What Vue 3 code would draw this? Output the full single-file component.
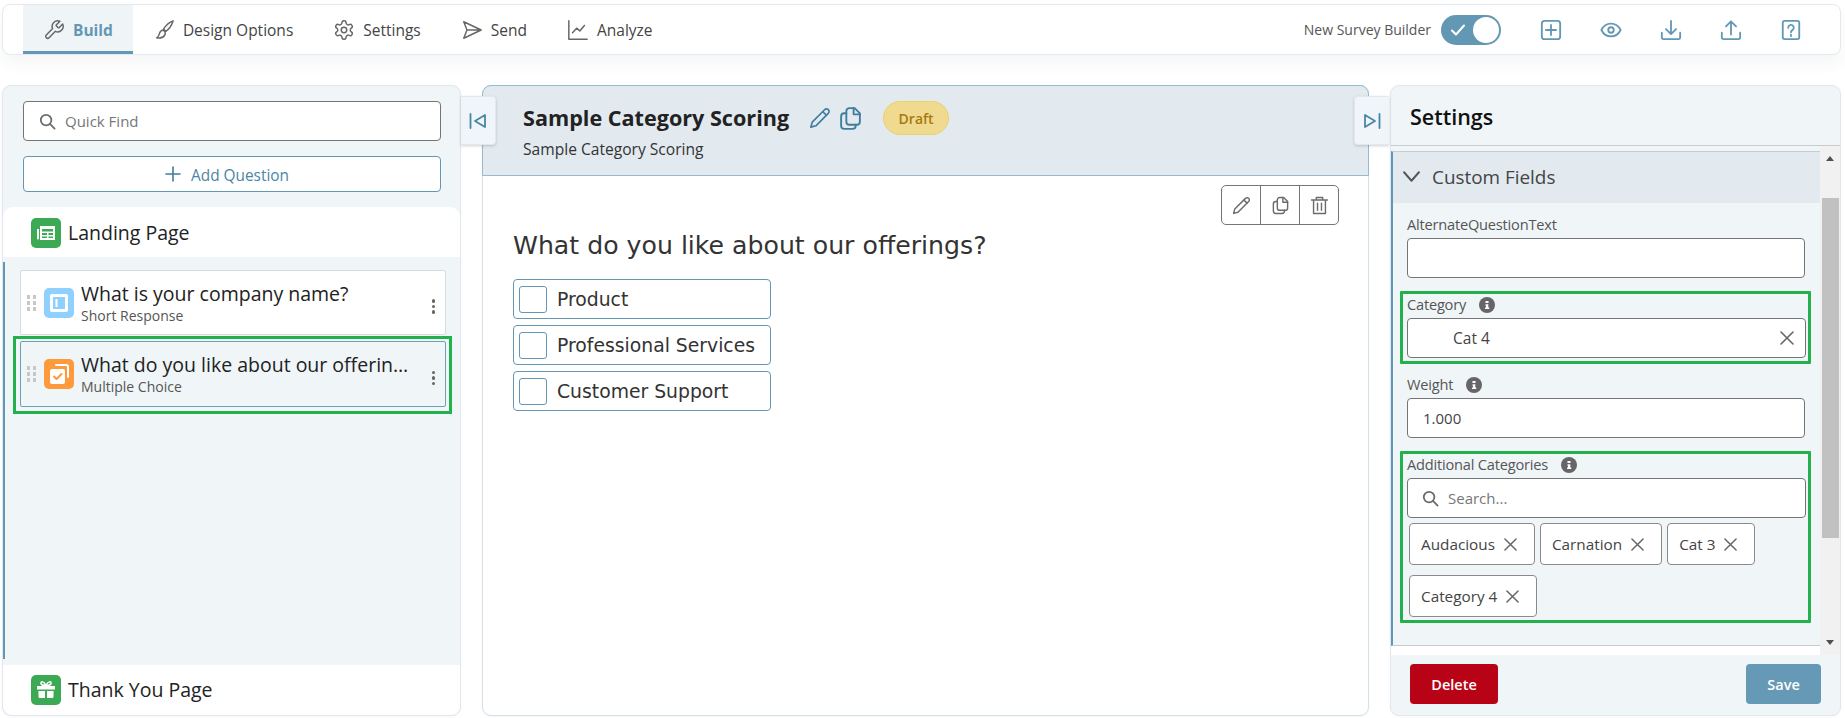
<template>
  <div class="page">
    <header class="topbar">
      <nav class="tabs">
        <a v-for="tab in tabs" :key="tab.name" class="tab" :class="{ active: tab.active }">
          <svg class="tab-icon" viewBox="0 0 24 24"><path v-for="d in tab.paths" :key="d" :d="d" /></svg>
          <span>{{ tab.name }}</span>
        </a>
      </nav>
      <div class="top-right">
        <span class="toggle-label">New Survey Builder</span>
        <div class="toggle">
          <svg class="toggle-check" viewBox="0 0 16 16"><path d="M2 8.5l4 4 8-9" /></svg>
          <span class="knob"></span>
        </div>
        <div class="actions">
          <svg v-for="a in actions" :key="a.name" class="action" viewBox="0 0 24 24">
            <path v-for="d in a.paths" :key="d" :d="d" />
          </svg>
        </div>
      </div>
    </header>

    <main class="workspace">
      <aside class="left panel">
        <div class="search quick">
          <svg class="search-icon" viewBox="0 0 24 24"><circle cx="10" cy="10" r="7.5" /><path d="M15.5 15.5L22 22" /></svg>
          <span>Quick Find</span>
        </div>
        <button class="add">
          <svg viewBox="0 0 16 16"><path d="M8 1v14M1 8h14" /></svg>
          Add Question
        </button>
        <div class="page-row landing">
          <span class="page-icon">
            <svg viewBox="0 0 24 24">
              <path class="solid" d="M6 5h15v14H6zM3 8h2v9.5a1 1 0 0 1-2 0z" />
              <path class="cut" d="M8 8h11v2.5H8zM8 12h5v2H8zM14.5 12H19v2h-4.5zM8 15.5h5V17H8zM14.5 15.5H19V17h-4.5z" />
            </svg>
          </span>
          Landing Page
        </div>
        <div class="question-list">
          <div v-for="q in questions" :key="q.title" class="question" :class="{ selected: q.selected }">
            <span class="drag"><i v-for="n in 6" :key="n"></i></span>
            <span class="q-icon" :class="q.type">
              <svg v-if="q.type === 'short'" viewBox="0 0 30 30">
                <rect x="6" y="6" width="18" height="18" rx="2" fill="#fff" />
                <rect x="9" y="9" width="12" height="12" fill="#8fd0ff" />
                <rect x="11.5" y="11" width="2" height="8" fill="#fff" />
              </svg>
              <svg v-else viewBox="0 0 30 30">
                <path d="M12 6h10a2 2 0 0 1 2 2v10" fill="none" stroke="#fff" stroke-width="2" />
                <rect x="6" y="10" width="15" height="15" rx="2" fill="#fff" />
                <path d="M10 17.5l2.5 2.5 5-5" fill="none" stroke="#ff9a3c" stroke-width="2" />
              </svg>
            </span>
            <div class="q-text">
              <div class="q-title">{{ q.title }}</div>
              <div class="q-type">{{ q.sub }}</div>
            </div>
            <span class="kebab"><i></i><i></i><i></i></span>
          </div>
        </div>
        <div class="page-row thanks">
          <span class="page-icon">
            <svg viewBox="0 0 24 24">
              <path class="solid" d="M3 8h18v3.5H3zM4.5 13h6.5v7H6a1.5 1.5 0 0 1-1.5-1.5zM13 13h6.5v5.5A1.5 1.5 0 0 1 18 20h-5z" />
              <path class="bow" d="M12 7.5C10 3 6.5 3 7 5.5 7.3 7 10 7.5 12 7.5zM12 7.5C14 3 17.5 3 17 5.5 16.7 7 14 7.5 12 7.5z" />
            </svg>
          </span>
          Thank You Page
        </div>
        <div class="edge-tab collapse-left">
          <svg viewBox="0 0 18 16"><path d="M1.5 1v14M16 2v12L6 8z" /></svg>
        </div>
      </aside>

      <section class="center panel">
        <div class="survey-head">
          <div class="survey-title">
            <h1>Sample Category Scoring</h1>
            <svg class="head-icon pencil" viewBox="0 0 24 24"><path d="M17 3a2.83 2.83 0 1 1 4 4L7.5 20.5 2 22l1.5-5.5Z" /><path d="M15 5l4 4" /></svg>
            <svg class="head-icon copy" viewBox="0 0 24 24"><path v-for="d in copyPaths" :key="d" :d="d" /></svg>
            <span class="badge">Draft</span>
          </div>
          <div class="survey-sub">Sample Category Scoring</div>
        </div>
        <div class="canvas">
          <div class="toolbar">
            <span class="tool"><svg viewBox="0 0 24 24"><path d="M17 3a2.83 2.83 0 1 1 4 4L7.5 20.5 2 22l1.5-5.5Z" /><path d="M15 5l4 4" /></svg></span>
            <span class="tool"><svg viewBox="0 0 24 24"><path v-for="d in copyPaths" :key="d" :d="d" /></svg></span>
            <span class="tool"><svg viewBox="0 0 24 24"><path d="M2 5h20M8 5V2h8v3M4.5 5v17h15V5M9.5 9v9M14.5 9v9" /></svg></span>
          </div>
          <h2 class="prompt">What do you like about our offerings?</h2>
          <div class="options">
            <label v-for="o in options" :key="o" class="option"><span class="box"></span>{{ o }}</label>
          </div>
        </div>
        <div class="edge-tab collapse-right">
          <svg viewBox="0 0 18 16"><path d="M16.5 1v14M2 2v12l10-6z" /></svg>
        </div>
      </section>

      <aside class="right panel">
        <div class="settings-head">Settings</div>
        <div class="settings-scroll">
          <div class="settings-content">
            <div class="section">
              <div class="section-head">
                <svg viewBox="0 0 16 12"><path d="M1 2l7 8 7-8" /></svg>
                Custom Fields
              </div>
              <div class="section-body">
                <div class="field alt">
                  <label>AlternateQuestionText</label>
                  <div class="input"></div>
                </div>
                <div class="field marked category">
                  <label>Category <span class="info"><svg viewBox="0 0 16 16"><circle cx="8" cy="8" r="8" /><path d="M6.5 4h3v2h-3zM6.5 7.2h2.8v3.3h1V12H6v-1.5h1V8.7h-.5z" /></svg></span></label>
                  <div class="input cat-value">
                    <span>Cat 4</span>
                    <svg class="x" viewBox="0 0 14 14"><path d="M1 1l12 12M13 1L1 13" /></svg>
                  </div>
                </div>
                <div class="field weight">
                  <label>Weight <span class="info"><svg viewBox="0 0 16 16"><circle cx="8" cy="8" r="8" /><path d="M6.5 4h3v2h-3zM6.5 7.2h2.8v3.3h1V12H6v-1.5h1V8.7h-.5z" /></svg></span></label>
                  <div class="input weight-value">1.000</div>
                </div>
                <div class="field marked additional">
                  <label>Additional Categories <span class="info"><svg viewBox="0 0 16 16"><circle cx="8" cy="8" r="8" /><path d="M6.5 4h3v2h-3zM6.5 7.2h2.8v3.3h1V12H6v-1.5h1V8.7h-.5z" /></svg></span></label>
                  <div class="search cat-search">
                    <svg class="search-icon" viewBox="0 0 24 24"><circle cx="10" cy="10" r="7.5" /><path d="M15.5 15.5L22 22" /></svg>
                    <span>Search...</span>
                  </div>
                  <div class="chips">
                    <span v-for="c in chips" :key="c" class="chip">
                      {{ c }}
                      <svg class="x" viewBox="0 0 14 14"><path d="M1 1l12 12M13 1L1 13" /></svg>
                    </span>
                  </div>
                </div>
              </div>
            </div>
          </div>
          <div class="scrollbar">
            <span class="arrow up"></span>
            <span class="thumb"></span>
            <span class="arrow down"></span>
          </div>
        </div>
        <div class="settings-foot">
          <button class="delete">Delete</button>
          <button class="save">Save</button>
        </div>
      </aside>
    </main>
  </div>
</template>

<script setup>
const tabs = [
  {
    name: "Build",
    active: true,
    paths: ["M14.7 6.3a1 1 0 0 0 0 1.4l1.6 1.6a1 1 0 0 0 1.4 0l3.77-3.77a6 6 0 0 1-7.94 7.94l-6.91 6.91a2.12 2.12 0 0 1-3-3l6.91-6.91a6 6 0 0 1 7.94-7.94l-3.76 3.76z"],
  },
  {
    name: "Design Options",
    paths: ["M22 2c-3 1-8 5-10.5 9l2.5 2.5C18 11 21 5 22 2z", "M11 12c-2.5.5-3.5 2-4 4-.3 1.5-1.5 3.5-3 4.5 3.5.5 7 0 8.5-2.5 1-1.5 1-3 .5-4z"],
  },
  {
    name: "Settings",
    paths: [
      "M12.22 2h-.44a2 2 0 0 0-2 2v.18a2 2 0 0 1-1 1.73l-.43.25a2 2 0 0 1-2 0l-.15-.08a2 2 0 0 0-2.73.73l-.22.38a2 2 0 0 0 .73 2.73l.15.1a2 2 0 0 1 1 1.72v.51a2 2 0 0 1-1 1.74l-.15.09a2 2 0 0 0-.73 2.73l.22.38a2 2 0 0 0 2.73.73l.15-.08a2 2 0 0 1 2 0l.43.25a2 2 0 0 1 1 1.73V20a2 2 0 0 0 2 2h.44a2 2 0 0 0 2-2v-.18a2 2 0 0 1 1-1.73l.43-.25a2 2 0 0 1 2 0l.15.08a2 2 0 0 0 2.73-.73l.22-.39a2 2 0 0 0-.73-2.73l-.15-.08a2 2 0 0 1-1-1.74v-.5a2 2 0 0 1 1-1.74l.15-.09a2 2 0 0 0 .73-2.73l-.22-.38a2 2 0 0 0-2.73-.73l-.15.08a2 2 0 0 1-2 0l-.43-.25a2 2 0 0 1-1-1.73V4a2 2 0 0 0-2-2z",
      "M15 12a3 3 0 1 1-6 0 3 3 0 0 1 6 0z",
    ],
  },
  { name: "Send", paths: ["M3 3l19 9-19 9 3.5-9zM6.5 12H22"] },
  { name: "Analyze", paths: ["M2 2v20h20", "M6 15l4.5-5 3.5 3 5-6"] },
];

const actions = [
  { name: "add", paths: ["M5 2h14a3 3 0 0 1 3 3v14a3 3 0 0 1-3 3H5a3 3 0 0 1-3-3V5a3 3 0 0 1 3-3z", "M12 6.5v11M6.5 12h11"] },
  { name: "preview", paths: ["M1.5 12C4 7 8 5 12 5s8 2 10.5 7C20 17 16 19 12 19s-8-2-10.5-7z", "M15 12a3 3 0 1 1-6 0 3 3 0 0 1 6 0z"] },
  { name: "download", paths: ["M12 2v14M6.5 11l5.5 5.5 5.5-5.5", "M2 15v5a2 2 0 0 0 2 2h16a2 2 0 0 0 2-2v-5"] },
  { name: "upload", paths: ["M12 17V2.5M6.5 8L12 2.5 17.5 8", "M2 15v5a2 2 0 0 0 2 2h16a2 2 0 0 0 2-2v-5"] },
  { name: "help", paths: ["M5 2h14a2 2 0 0 1 2 2v16a2 2 0 0 1-2 2H5a2 2 0 0 1-2-2V4a2 2 0 0 1 2-2z", "M9 9.5a3 3 0 1 1 4.5 2.6c-1 .6-1.5 1.2-1.5 2.4", "M12 17v1.5"] },
];

const copyPaths = [
  "M8 7H6a3 3 0 0 0-3 3v9a3 3 0 0 0 3 3h8a3 3 0 0 0 3-3v-1",
  "M8 5a3 3 0 0 1 3-3h5l5 5v8a3 3 0 0 1-3 3h-7a3 3 0 0 1-3-3z",
  "M15 2v6h6",
];

const questions = [
  { title: "What is your company name?", sub: "Short Response", type: "short" },
  { title: "What do you like about our offerings?", sub: "Multiple Choice", type: "multi", selected: true },
];

const options = ["Product", "Professional Services", "Customer Support"];
const chips = ["Audacious", "Carnation", "Cat 3", "Category 4"];
</script>

<style>
html,
body {
  margin: 0;
  background: #fff;
}
</style>

<style scoped>
.page {
  width: 1845px;
  height: 718px;
  box-sizing: border-box;
  padding: 4px 0 2px 2px;
  overflow: hidden;
  font-family: "Open Sans", "Noto Sans", sans-serif;
  color: #222;
}
svg {
  display: block;
  fill: none;
  stroke-linecap: round;
  stroke-linejoin: round;
}

/* top bar */
.topbar {
  width: 1839px;
  height: 51px;
  box-sizing: border-box;
  display: flex;
  justify-content: space-between;
  border: 1px solid #e6e8ef;
  border-radius: 8px;
  background: #fff;
  box-shadow: 0 8px 16px rgba(40, 50, 80, 0.05);
}
.tabs {
  display: flex;
  padding-left: 20px;
}
.tab {
  display: flex;
  align-items: center;
  gap: 8px;
  padding: 0 20px 0 20px;
  font-size: 15.5px;
  color: #444;
}
.tab.active {
  background: #eff4f7;
  border-bottom: 3px solid #6398b5;
  padding-top: 3px;
  color: #6398b5;
  font-weight: 700;
}
.tab-icon {
  width: 22px;
  height: 22px;
  stroke: #666;
  stroke-width: 1.6;
}
.top-right {
  display: flex;
  align-items: center;
}
.toggle-label {
  font-size: 14px;
  color: #555;
  margin-right: 10px;
}
.toggle {
  width: 60px;
  height: 30px;
  border-radius: 15px;
  background: #6398b5;
  display: flex;
  align-items: center;
  justify-content: space-between;
  padding: 0 2px 0 9px;
  box-sizing: border-box;
}
.toggle-check {
  width: 16px;
  height: 16px;
  stroke: #fff;
  stroke-width: 2;
}
.knob {
  width: 26px;
  height: 26px;
  border-radius: 50%;
  background: #fff;
}
.actions {
  display: flex;
  gap: 38px;
  margin: 0 38px 0 39px;
}
.action {
  width: 22px;
  height: 22px;
  stroke: #6398b5;
  stroke-width: 2;
}

/* three columns */
.workspace {
  margin-top: 30px;
  height: 631px;
  display: grid;
  grid-template-columns: 459px 887px 451px;
  column-gap: 21px;
}
.panel {
  position: relative;
  box-sizing: border-box;
  display: flex;
  flex-direction: column;
  border: 1px solid #e2e6ee;
  border-radius: 9px;
  background: #f0f5f8;
  box-shadow: 0 1px 3px rgba(40, 50, 80, 0.04);
}

/* left column */
.search {
  display: flex;
  align-items: center;
  height: 40px;
  box-sizing: border-box;
  border: 1px solid #757575;
  border-radius: 4px;
  background: #fff;
  color: #777;
  font-size: 15px;
}
.search-icon {
  width: 17px;
  height: 17px;
  stroke: #6b6b6b;
  stroke-width: 2.5;
}
.quick {
  margin: 15px 19px 0 20px;
  padding-left: 15px;
  gap: 9px;
}
.add {
  margin: 15px 19px 0 20px;
  height: 36px;
  display: flex;
  align-items: center;
  justify-content: center;
  gap: 10px;
  padding: 2px 10px 0 0;
  border: 1px solid #6398b5;
  border-radius: 4px;
  background: #fff;
  color: #4a86a5;
  font: 15.4px "Open Sans", sans-serif;
}
.add svg {
  width: 16px;
  height: 16px;
  margin-top: -2px;
  stroke: #3f7d9c;
  stroke-width: 1.6;
}
.page-row {
  display: flex;
  align-items: center;
  gap: 7px;
  height: 50px;
  box-sizing: border-box;
  padding-left: 28px;
  background: #fff;
  font-size: 19.5px;
  color: #222;
  flex: none;
}
.landing {
  margin-top: 15px;
  padding-top: 1px;
  border-radius: 10px 10px 0 0;
}
.thanks {
  padding-bottom: 1px;
  border-radius: 0 0 9px 9px;
}
.page-icon {
  width: 30px;
  height: 30px;
  border-radius: 5px;
  background: #3caa55;
  display: flex;
  align-items: center;
  justify-content: center;
}
.page-icon svg {
  width: 24px;
  height: 24px;
}
.solid {
  fill: #fff;
}
.cut {
  fill: #3caa55;
}
.bow {
  stroke: #fff;
  stroke-width: 1.5;
}
.question-list {
  flex: 1;
  margin: 5px 0 6px;
  padding: 8px 14px 0 15px;
  border-left: 2px solid #6398b5;
  display: flex;
  flex-direction: column;
  gap: 6px;
}
.question {
  position: relative;
  height: 65px;
  box-sizing: border-box;
  border: 1px solid #d8dadd;
  border-radius: 2px;
  background: #fff;
  display: flex;
  align-items: center;
  padding: 0 7px 0 6px;
}
.question.selected {
  border-color: #6f9fb5;
  background: #f0f5f8;
  height: 66px;
}
.question.selected::after {
  content: "";
  position: absolute;
  inset: -6px -7px -8px -8px;
  border: 3px solid #22b14c;
  pointer-events: none;
}
.drag {
  width: 9px;
  display: grid;
  grid-template-columns: 3px 3px;
  gap: 2px 3px;
  margin-right: 8px;
}
.drag i {
  width: 3px;
  height: 4px;
  background: #c8c8c8;
}
.q-icon {
  width: 30px;
  height: 30px;
  border-radius: 5px;
  flex: none;
}
.q-icon.short {
  background: #8fd0ff;
}
.q-icon.multi {
  background: #ff9a3c;
}
.q-text {
  margin-left: 7px;
  width: 334px;
  min-width: 0;
}
.q-title {
  font-size: 19.5px;
  line-height: 28px;
  margin-bottom: -2px;
  white-space: nowrap;
  overflow: hidden;
  text-overflow: ellipsis;
  color: #222;
}
.q-type {
  font-size: 14px;
  line-height: 20px;
  color: #555;
}
.kebab {
  margin: 8px 3px 0 auto;
  display: flex;
  flex-direction: column;
  gap: 2px;
}
.kebab i {
  width: 3.5px;
  height: 3.5px;
  border-radius: 50%;
  background: #666;
}
.edge-tab {
  position: absolute;
  top: 10px;
  width: 35px;
  height: 49px;
  box-sizing: border-box;
  border: 1px solid #e4e8ee;
  background: #eff5f9;
  display: flex;
  align-items: center;
  justify-content: center;
  box-shadow: 0 1px 3px rgba(0, 0, 0, 0.18);
}
.edge-tab svg {
  width: 18px;
  height: 16px;
  stroke: #4a86a5;
  stroke-width: 1.8;
}
.collapse-left {
  left: 458px;
  border-radius: 0 4px 4px 0;
  border-left: none;
  z-index: 2;
}
.collapse-right {
  right: -21px;
  border-radius: 4px 0 0 4px;
  border-right: none;
  z-index: 2;
}

/* middle column */
.center {
  background: #fff;
  border-color: #d3e0e8;
}
.survey-head {
  height: 91px;
  box-sizing: border-box;
  margin: -1px -1px 0;
  padding: 15px 40px 0;
  background: #e2eaf0;
  border: 1px solid #96bbd0;
  border-radius: 9px 9px 0 0;
}
.survey-title {
  display: flex;
  align-items: center;
  height: 34px;
}
h1 {
  margin: -2px 0 0;
  font-size: 21.6px;
  font-weight: 700;
  color: #222;
}
.head-icon {
  width: 22px;
  height: 22px;
  stroke: #3f7d9c;
  stroke-width: 1.8;
}
.head-icon.pencil {
  margin-left: 20px;
}
.head-icon.copy {
  width: 25px;
  height: 25px;
  margin-left: 7px;
}
.badge {
  margin-left: 20px;
  width: 66px;
  height: 34px;
  box-sizing: border-box;
  border: 1px solid #eccf6e;
  border-radius: 17px;
  background: #f0da90;
  color: #a67a10;
  font-size: 14px;
  font-weight: 600;
  display: flex;
  align-items: center;
  justify-content: center;
}
.survey-sub {
  margin-top: 3px;
  font-size: 15.6px;
  color: #333;
}
.canvas {
  padding: 9px 31px 0 30px;
}
.toolbar {
  width: 118px;
  height: 40px;
  box-sizing: border-box;
  margin-left: auto;
  margin-right: -2px;
  border: 1px solid #757575;
  border-radius: 5px;
  display: flex;
}
.tool {
  flex: 1;
  display: flex;
  align-items: center;
  justify-content: center;
}
.tool + .tool {
  border-left: 1px solid #757575;
}
.tool svg {
  width: 19px;
  height: 19px;
  stroke: #6b6b6b;
  stroke-width: 1.8;
}
.prompt {
  margin: 0;
  font: 400 25.2px/42px "DejaVu Sans", sans-serif;
  color: #333;
}
.options {
  margin-top: 12px;
  display: flex;
  flex-direction: column;
  gap: 6px;
  width: 258px;
}
.option {
  height: 40px;
  box-sizing: border-box;
  border: 1px solid #6398b5;
  border-radius: 4px;
  display: flex;
  align-items: center;
  padding-left: 5px;
  gap: 10px;
  font: 18.8px "DejaVu Sans", sans-serif;
  color: #333;
}
.box {
  width: 28px;
  height: 27px;
  box-sizing: border-box;
  border: 1px solid #6398b5;
  border-radius: 3px;
}

/* right column */
.settings-head {
  height: 60px;
  flex: none;
  box-sizing: border-box;
  padding: 2px 0 0 19px;
  display: flex;
  align-items: center;
  font-size: 21.5px;
  font-weight: 600;
  color: #111;
  border-bottom: 1px solid #c8ccd0;
}
.settings-scroll {
  height: 509px;
  flex: none;
  display: flex;
}
.settings-content {
  width: 430px;
  padding-top: 5px;
  display: flex;
  flex-direction: column;
  background: linear-gradient(#f0f5f8 0 499px, #fff 499px);
}
.section {
  height: 495px;
  box-sizing: border-box;
  border-top: 1px solid #c8ccd0;
  border-bottom: 1px solid #c8ccd0;
  border-left: 2px solid #5f99b5;
}
.section-head {
  height: 51px;
  box-sizing: border-box;
  padding: 0 0 2px 10px;
  background: #e2eaf0;
  display: flex;
  align-items: center;
  gap: 12px;
  font-size: 18.9px;
  color: #444;
}
.section-head svg {
  width: 17px;
  height: 13px;
  stroke: #555;
  stroke-width: 1.8;
}
.section-body {
  padding: 11px 15px 0 14px;
}
.field label {
  display: flex;
  align-items: center;
  gap: 13px;
  height: 22px;
  box-sizing: border-box;
  padding-bottom: 2px;
  margin-bottom: 2px;
  font-size: 14.6px;
  color: #555;
  letter-spacing: -0.2px;
}
.info svg {
  width: 16px;
  height: 16px;
  fill: #666;
  margin-top: 2px;
}
.info svg path {
  fill: #fff;
}
.input {
  height: 40px;
  box-sizing: border-box;
  border: 1px solid #757575;
  border-radius: 4px;
  background: #fff;
  display: flex;
  align-items: center;
  font-size: 15px;
  color: #444;
}
.marked {
  border: 3px solid #22b14c;
  border-radius: 1px;
  margin: 0 -6px 0 -7px;
  padding: 0 2px 3px 4px;
}
.category {
  margin-top: 13px;
}
.cat-value {
  justify-content: space-between;
  padding: 0 11px 0 45px;
  font-size: 15.5px;
}
.x {
  width: 14px;
  height: 14px;
  stroke: #666;
  stroke-width: 1.6;
}
.weight {
  margin-top: 10px;
}
.weight-value {
  padding-left: 15px;
}
.additional {
  margin-top: 13px;
}
.cat-search {
  padding-left: 14px;
  gap: 9px;
}
.chips {
  margin: 5px 0 0 2px;
  display: flex;
  flex-wrap: wrap;
  gap: 10px 5px;
}
.chip {
  height: 42px;
  box-sizing: border-box;
  border: 1px solid #8a8a8a;
  border-radius: 4px;
  background: #fff;
  display: flex;
  align-items: center;
  gap: 9px;
  padding: 0 17px 0 11px;
  font-size: 15.3px;
  color: #444;
}
.chip .x {
  width: 13px;
  height: 13px;
}
.scrollbar {
  width: 20px;
  background: #f1f1f1;
  display: flex;
  flex-direction: column;
  align-items: center;
}
.arrow {
  width: 0;
  height: 0;
  border-left: 4.5px solid transparent;
  border-right: 4.5px solid transparent;
}
.arrow.up {
  margin-top: 10px;
  border-bottom: 5px solid #505050;
}
.arrow.down {
  margin-bottom: 10px;
  border-top: 5px solid #505050;
}
.thumb {
  width: 17px;
  height: 340px;
  margin: 37px 0 auto;
  background: #c1c1c1;
}
.settings-foot {
  flex: 1;
  display: flex;
  justify-content: space-between;
  padding: 9px 19px 0 19px;
}
.settings-foot button {
  height: 40px;
  border: none;
  border-radius: 4px;
  color: #fff;
  font: 600 14.5px "Open Sans", sans-serif;
}
.delete {
  width: 88px;
  background: #b80316;
}
.save {
  width: 75px;
  background: #6699b5;
}
</style>
